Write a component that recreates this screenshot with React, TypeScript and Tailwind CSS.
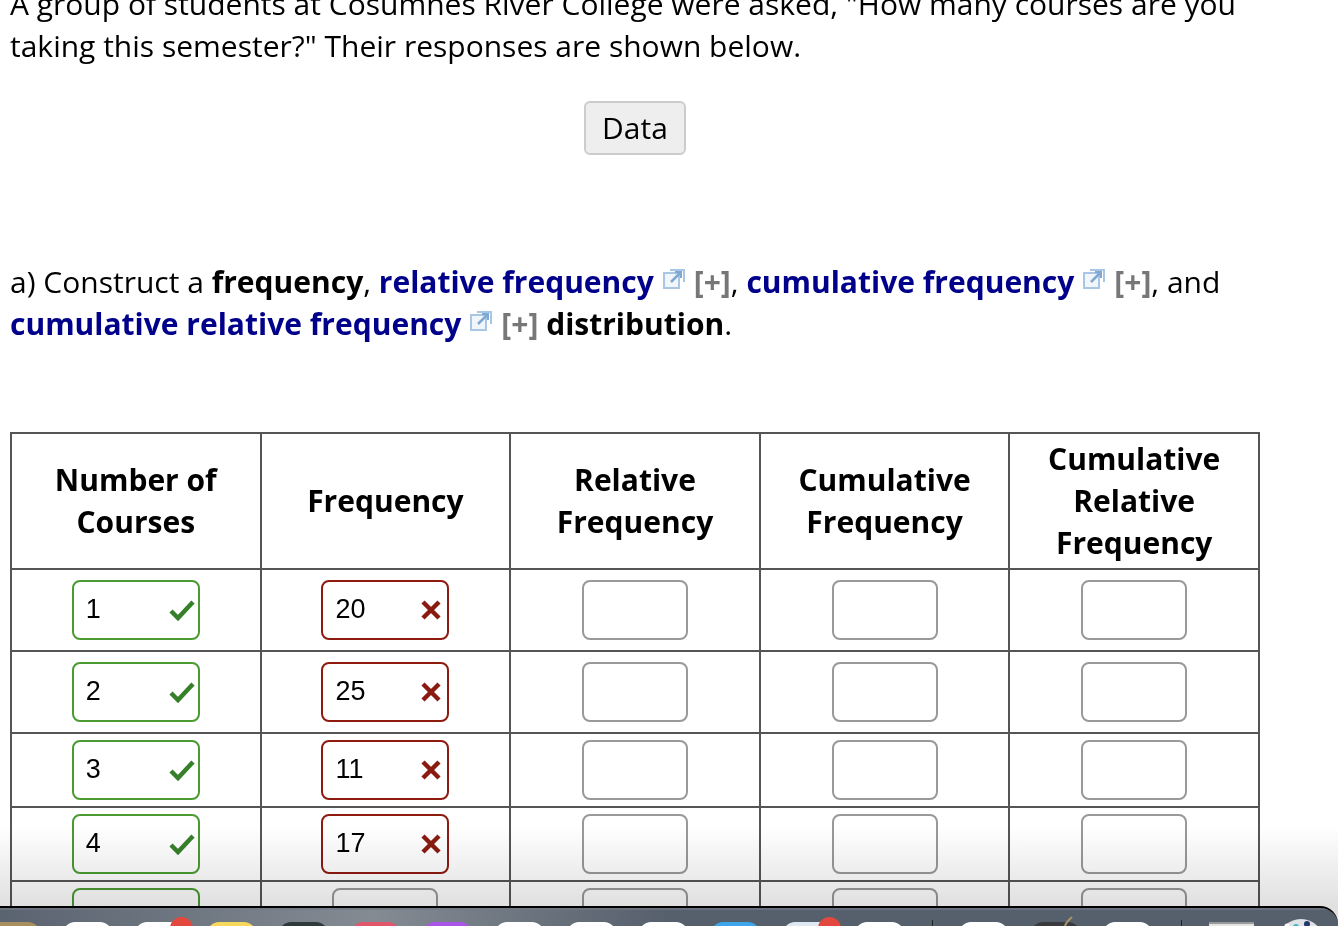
import React from "react";

const ExternalIcon = () => (
  <svg viewBox="0 0 24 24" className="inline-block w-[24px] h-[24px] ml-[8px] mr-[8px] align-[2px]" fill="none">
    <rect x="2" y="6" width="15" height="15" stroke="#a9c6e4" strokeWidth="2" fill="#f1f6fb" />
    <path d="M8 3h14v12" stroke="#a9c6e4" strokeWidth="2" />
    <path d="M9 15L19 5" stroke="#7fa8d2" strokeWidth="2.5" />
    <path d="M13 5h6v6" stroke="#7fa8d2" strokeWidth="2" />
  </svg>
);

const Term = ({ children }: { children: React.ReactNode }) => (
  <>
    <span className="font-bold text-[#00008b]">{children}</span>
    <ExternalIcon />
    <span className="font-bold text-[#777]">[+]</span>
  </>
);

const Check = () => (
  <svg viewBox="0 0 26 22" className="absolute right-[5px] top-[19px] w-[26px] h-[22px]" fill="none">
    <path d="M2 12l7 7L24 3" stroke="#37802a" strokeWidth="4.5" />
  </svg>
);

const Cross = () => (
  <svg viewBox="0 0 20 20" className="absolute right-[8px] top-[20px] w-[20px] h-[20px]" fill="none">
    <path d="M2 2l16 16M18 2L2 18" stroke="#8b1a10" strokeWidth="4.5" />
  </svg>
);

const Field = ({ value, status }: { value?: string; status?: "ok" | "bad" }) => {
  if (!status) {
    return (
      <div className="flex justify-center">
        <input readOnly className="w-[106px] h-[60px] rounded-lg border-2 border-[#999] bg-transparent outline-none" />
      </div>
    );
  }
  return (
    <div className="flex justify-center">
      <div className="relative w-[128px] h-[60px]">
        <input
          readOnly
          value={value ?? ""}
          className={`w-full h-full rounded-lg border-2 bg-transparent pl-[12px] pb-[2px] text-[27px] text-black outline-none font-['Liberation_Sans',sans-serif] ${status === "ok" ? "border-[#4a9b32]" : "border-[#8f1a10]"}`}
        />
        {status === "ok" ? <Check /> : <Cross />}
      </div>
    </div>
  );
};

const rows = [
  { n: "1", f: "20", h: "h-[82px]" },
  { n: "2", f: "25", h: "h-[82px]" },
  { n: "3", f: "11", h: "h-[74px]" },
  { n: "4", f: "17", h: "h-[74px]" },
  { n: "", f: "", h: "h-[74px]" },
];

const DockIcon = ({ color, badge, stem }: { color: string; badge?: boolean; stem?: boolean }) => (
  <div className={`relative w-[49px] h-[20px] shrink-0 rounded-t-xl ${color}`}>
    {badge && <div className="absolute -top-[5px] -right-[9px] w-[23px] h-[23px] rounded-full bg-[#e2483d]" />}
    {stem && (
      <svg viewBox="0 0 12 10" className="absolute -top-[6px] right-[5px] w-[12px] h-[10px]" fill="none">
        <path d="M2 10C3 6 6 4 9 1" stroke="#a8946a" strokeWidth="2" />
      </svg>
    )}
  </div>
);

const Ball = () => (
  <svg viewBox="0 0 48 24" className="w-[48px] h-[24px] shrink-0 -mt-[4px]">
    <circle cx="24" cy="24" r="23" fill="#dfe2e6" />
    <circle cx="19" cy="9" r="3" fill="#3fb6c4" />
    <circle cx="30" cy="6" r="3" fill="#23386e" />
    <circle cx="36" cy="10" r="2" fill="#c24a4a" />
    <circle cx="10" cy="8" r="2.5" fill="#ffffff" />
  </svg>
);

export default function App() {
  return (
    <div className="h-[926px] overflow-hidden flex flex-col bg-white font-['Open_Sans',sans-serif] text-black">
      <div className="relative h-[906px] shrink-0 overflow-hidden">
        <div className="-mt-[17px] pl-[10px] pr-[78px] text-[30px] leading-[42px]">
          <p className="w-[1240px]">
            A group of students at Cosumnes River College were asked, "How many courses are you taking this semester?" Their responses are shown below.
          </p>
          <div className="flex justify-center mt-[34px] w-[1250px]">
            <button className="h-[54px] w-[102px] rounded-md border-2 border-[#ccc] bg-[#eee] text-[30px]">Data</button>
          </div>
          <p className="mt-[106px] w-[1240px]">
            a) Construct a <b>frequency</b>, <Term>relative frequency</Term>, <Term>cumulative frequency</Term>, and{" "}
            <Term>cumulative relative frequency</Term> <b>distribution</b>.
          </p>
          <table className="mt-[87px] w-[1250px] table-fixed border-collapse text-[30px] leading-[42px]">
            <thead>
              <tr className="h-[136px]">
                {["Number of Courses", "Frequency", "Relative Frequency", "Cumulative Frequency", "Cumulative Relative Frequency"].map((t) => (
                  <th key={t} className="border-2 border-[#555] px-[30px] font-bold text-center">
                    {t}
                  </th>
                ))}
              </tr>
            </thead>
            <tbody>
              {rows.map((r, i) => (
                <tr key={i} className={r.h}>
                  <td className="border-2 border-[#555]">
                    <Field value={r.n} status="ok" />
                  </td>
                  <td className="border-2 border-[#555]">
                    <Field value={r.f} status={r.f ? "bad" : undefined} />
                  </td>
                  <td className="border-2 border-[#555]"><Field /></td>
                  <td className="border-2 border-[#555]"><Field /></td>
                  <td className="border-2 border-[#555]"><Field /></td>
                </tr>
              ))}
            </tbody>
          </table>
        </div>
        <div className="absolute inset-x-0 bottom-0 h-[80px] bg-gradient-to-b from-transparent to-[#e0e0e0] mix-blend-multiply pointer-events-none" />
      </div>
      <div className="h-[20px] shrink-0 overflow-hidden bg-[#e0e0e0]">
        <div className="h-[20px] overflow-hidden rounded-tr-[18px] border-t-2 border-black bg-gradient-to-r from-[#5a6370] from-0% via-[#848b93] via-[28%] to-[#565f6c] to-[50%]">
          <div className="h-[2px] bg-[#6f7883]/70" />
          <div className="flex items-start gap-[23px] pt-[12px]">
            <div className="w-[40px] h-[20px] shrink-0 rounded-tr-xl bg-[#a98f5e]" />
            <DockIcon color="bg-white" />
            <DockIcon color="bg-white" badge />
            <DockIcon color="bg-[#f6d95c]" />
            <DockIcon color="bg-[#2f3b3a]" />
            <DockIcon color="bg-[#e0566b]" />
            <DockIcon color="bg-[#a855e8]" />
            <DockIcon color="bg-white" />
            <DockIcon color="bg-white" />
            <DockIcon color="bg-white" />
            <DockIcon color="bg-[#3da5ea]" />
            <DockIcon color="bg-[#dfe9f2]" badge />
            <DockIcon color="bg-white" />
            <div className="w-px h-[20px] shrink-0 -mt-[2px] ml-[5px] mr-[3px] bg-[#222]" />
            <DockIcon color="bg-white" />
            <DockIcon color="bg-[#3a3a3e]" stem />
            <DockIcon color="bg-white" />
            <div className="w-px h-[20px] shrink-0 -mt-[2px] ml-[6px] mr-[4px] bg-[#222]" />
            <div className="w-[45px] h-[20px] shrink-0 border-t-2 border-[#999] bg-[#e4e4e4]" />
            <Ball />
          </div>
        </div>
      </div>
    </div>
  );
}
